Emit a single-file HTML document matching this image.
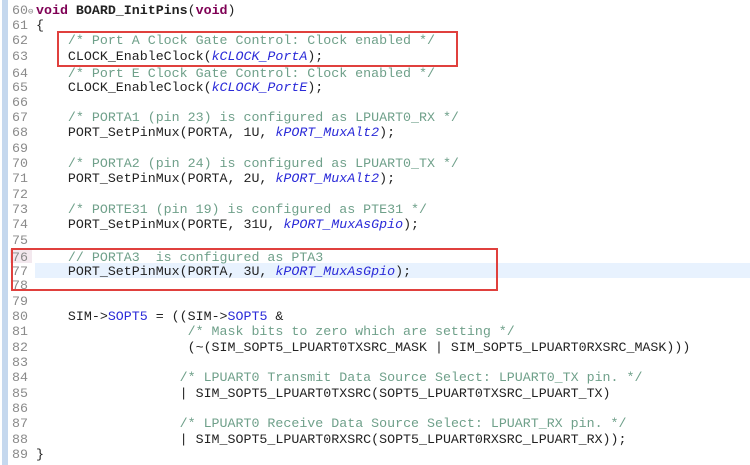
<!DOCTYPE html>
<html><head><style>
body{margin:0;width:750px;height:465px;background:#fff;position:relative;overflow:hidden;font-family:"Liberation Mono",monospace;font-size:13.3px;}
.bar{position:absolute;left:2px;top:0;width:6px;height:465px;background:#c5d8ee;}
.l{position:absolute;left:0;height:15px;line-height:15px;white-space:pre;width:750px;}
.n{position:absolute;left:12px;color:#8a8a8a;}
.c{position:absolute;left:36px;color:#222;}
.cm{color:#6fa08a;}
.k{color:#7f0055;font-weight:bold;}
.e{color:#2a2ad8;font-style:italic;}
.f{color:#2a2ad8;}
.box{position:absolute;border:2px solid #e0403d;}
</style></head><body>
<div class="bar"></div>
<div style="position:absolute;left:35px;top:263px;width:715px;height:15px;background:#e8f2fe"></div>
<div style="position:absolute;left:10px;top:249px;width:22px;height:14px;background:#f3e8ee"></div>
<div class="l" style="top:3px"><span class="n">60<span style="font-size:9px">⊖</span></span><span class="c"><span class="k">void</span> <b>BOARD_InitPins</b>(<span class="k">void</span>)</span></div>
<div class="l" style="top:18px"><span class="n">61</span><span class="c">{</span></div>
<div class="l" style="top:33px"><span class="n">62</span><span class="c">    <span class="cm">/* Port A Clock Gate Control: Clock enabled */</span></span></div>
<div class="l" style="top:49px"><span class="n">63</span><span class="c">    CLOCK_EnableClock(<span class="e">kCLOCK_PortA</span>);</span></div>
<div class="l" style="top:66px"><span class="n">64</span><span class="c">    <span class="cm">/* Port E Clock Gate Control: Clock enabled */</span></span></div>
<div class="l" style="top:80px"><span class="n">65</span><span class="c">    CLOCK_EnableClock(<span class="e">kCLOCK_PortE</span>);</span></div>
<div class="l" style="top:95px"><span class="n">66</span></div>
<div class="l" style="top:110px"><span class="n">67</span><span class="c">    <span class="cm">/* PORTA1 (pin 23) is configured as LPUART0_RX */</span></span></div>
<div class="l" style="top:125px"><span class="n">68</span><span class="c">    PORT_SetPinMux(PORTA, 1U, <span class="e">kPORT_MuxAlt2</span>);</span></div>
<div class="l" style="top:141px"><span class="n">69</span></div>
<div class="l" style="top:156px"><span class="n">70</span><span class="c">    <span class="cm">/* PORTA2 (pin 24) is configured as LPUART0_TX */</span></span></div>
<div class="l" style="top:171px"><span class="n">71</span><span class="c">    PORT_SetPinMux(PORTA, 2U, <span class="e">kPORT_MuxAlt2</span>);</span></div>
<div class="l" style="top:187px"><span class="n">72</span></div>
<div class="l" style="top:202px"><span class="n">73</span><span class="c">    <span class="cm">/* PORTE31 (pin 19) is configured as PTE31 */</span></span></div>
<div class="l" style="top:217px"><span class="n">74</span><span class="c">    PORT_SetPinMux(PORTE, 31U, <span class="e">kPORT_MuxAsGpio</span>);</span></div>
<div class="l" style="top:233px"><span class="n">75</span></div>
<div class="l" style="top:250px"><span class="n">76</span><span class="c">    <span class="cm">// PORTA3  is configured as PTA3</span></span></div>
<div class="l" style="top:264px"><span class="n">77</span><span class="c">    PORT_SetPinMux(PORTA, 3U, <span class="e">kPORT_MuxAsGpio</span>);</span></div>
<div class="l" style="top:278px"><span class="n">78</span></div>
<div class="l" style="top:294px"><span class="n">79</span></div>
<div class="l" style="top:309px"><span class="n">80</span><span class="c">    SIM-&gt;<span class="f">SOPT5</span> = ((SIM-&gt;<span class="f">SOPT5</span> &amp;</span></div>
<div class="l" style="top:324px"><span class="n">81</span><span class="c">                   <span class="cm">/* Mask bits to zero which are setting */</span></span></div>
<div class="l" style="top:340px"><span class="n">82</span><span class="c">                   (~(SIM_SOPT5_LPUART0TXSRC_MASK | SIM_SOPT5_LPUART0RXSRC_MASK)))</span></div>
<div class="l" style="top:355px"><span class="n">83</span></div>
<div class="l" style="top:370px"><span class="n">84</span><span class="c">                  <span class="cm">/* LPUART0 Transmit Data Source Select: LPUART0_TX pin. */</span></span></div>
<div class="l" style="top:386px"><span class="n">85</span><span class="c">                  | SIM_SOPT5_LPUART0TXSRC(SOPT5_LPUART0TXSRC_LPUART_TX)</span></div>
<div class="l" style="top:401px"><span class="n">86</span></div>
<div class="l" style="top:416px"><span class="n">87</span><span class="c">                  <span class="cm">/* LPUART0 Receive Data Source Select: LPUART_RX pin. */</span></span></div>
<div class="l" style="top:432px"><span class="n">88</span><span class="c">                  | SIM_SOPT5_LPUART0RXSRC(SOPT5_LPUART0RXSRC_LPUART_RX));</span></div>
<div class="l" style="top:447px"><span class="n">89</span><span class="c">}</span></div>
<div class="box" style="left:57px;top:31px;width:397px;height:32px"></div>
<div class="box" style="left:11px;top:248px;width:483px;height:39px"></div>
</body></html>
